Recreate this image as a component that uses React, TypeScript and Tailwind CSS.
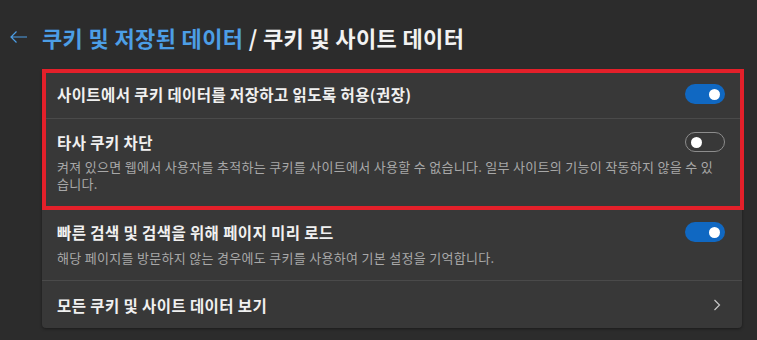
import React from 'react';

const font = { fontFamily: '"Noto Sans CJK KR", "Noto Sans", sans-serif' };

const Toggle: React.FC<{ on: boolean }> = ({ on }) =>
  on ? (
    <div className="flex h-[20px] w-[40px] items-center justify-end rounded-full bg-[#1068c2] pr-[5px]">
      <div className="h-[11px] w-[11px] rounded-full bg-white" />
    </div>
  ) : (
    <div className="flex h-[20px] w-[40px] items-center rounded-full border border-[#8c8c8c] pl-[5px]">
      <div className="h-[11px] w-[11px] rounded-full bg-white" />
    </div>
  );

const title = 'text-[15.5px] font-bold leading-[20px] tracking-[0.4px] text-[#f0f0f0]';
const desc = 'text-[13px] leading-[17px] tracking-[0.3px] text-[#a8a8a8]';

export default function App() {
  return (
    <div className="h-[340px] w-[757px] overflow-hidden bg-[#2c2c2c]" style={font}>
      <div className="flex h-[70px] items-center pl-[9px] pt-[4px]">
        <svg width="19" height="14" viewBox="0 0 19 14" className="mr-[14px]">
          <path d="M18 7H2M7.5 1.5 2 7l5.5 5.5" fill="none" stroke="#4c9ee6" strokeWidth="1.2" />
        </svg>
        <h1 className="text-[22px] font-bold leading-none tracking-[0.35px] text-[#f2f2f2]">
          <span className="text-[#4c9ee6]">쿠키 및 저장된 데이터</span> / 쿠키 및 사이트 데이터
        </h1>
      </div>

      <div className="relative ml-[42px] w-[700px] rounded-[4px] bg-[#383838] shadow-[0_1px_3px_rgba(0,0,0,0.4)]">
        <div className="flex h-[49px] items-center justify-between border-b border-[#4a4a4a] pl-[15px] pr-[17px]">
          <span className={title}>사이트에서 쿠키 데이터를 저장하고 읽도록 허용(권장)</span>
          <Toggle on />
        </div>

        <div className="border-b border-[#4a4a4a] pb-[16px] pl-[15px] pr-[17px] pt-[13px]">
          <div className="flex items-center justify-between">
            <span className={title}>타사 쿠키 차단</span>
            <Toggle on={false} />
          </div>
          <p className={`mt-[6px] w-[664px] ${desc}`}>
            켜져 있으면 웹에서 사용자를 추적하는 쿠키를 사이트에서 사용할 수 없습니다. 일부 사이트의 기능이 작동하지 않을 수 있습니다.
          </p>
        </div>

        <div className="border-b border-[#4a4a4a] pb-[14px] pl-[15px] pr-[17px] pt-[13px]">
          <div className="flex items-center justify-between">
            <span className={title}>빠른 검색 및 검색을 위해 페이지 미리 로드</span>
            <Toggle on />
          </div>
          <p className={`mt-[7px] ${desc}`}>
            해당 페이지를 방문하지 않는 경우에도 쿠키를 사용하여 기본 설정을 기억합니다.
          </p>
        </div>

        <div className="flex h-[47px] items-center justify-between pl-[15px] pr-[21px]">
          <span className={title}>모든 쿠키 및 사이트 데이터 보기</span>
          <svg width="8" height="12" viewBox="0 0 8 12">
            <path d="M1.5 1 6.5 6l-5 5" fill="none" stroke="#c8c8c8" strokeWidth="1.2" />
          </svg>
        </div>

        {/* annotation box */}
        <div className="pointer-events-none absolute -top-[1px] left-0 h-[141px] w-[702px] border-4 border-[#e3202a]" />
      </div>
    </div>
  );
}
